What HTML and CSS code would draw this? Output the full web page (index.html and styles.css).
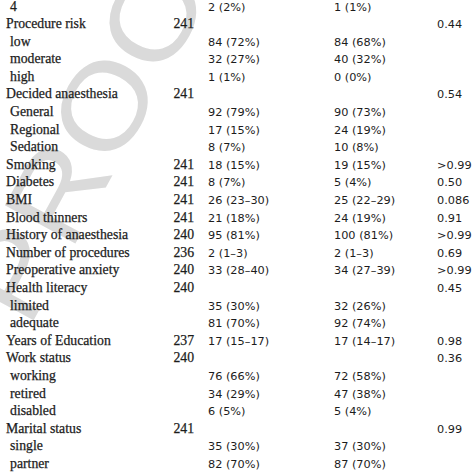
FILE: index.html
```html
<!DOCTYPE html>
<html>
<head>
<meta charset="utf-8">
<link rel="stylesheet" href="styles.css">
</head>
<body>
<div class="page">
  <svg class="watermark" width="474" height="474" viewBox="0 0 474 474">
    <text x="0" y="0" transform="translate(28.5,329.8) rotate(-61.5) scale(1.08,0.96)">PROOF</text>
  </svg>
  <table class="data">
    <colgroup>
      <col class="c-label"><col class="c-n"><col class="c-v1"><col class="c-v2"><col class="c-p">
    </colgroup>
    <tbody>
      <tr class="sub"><td>4</td><td></td><td>2 (2%)</td><td>1 (1%)</td><td></td></tr>
      <tr><td>Procedure risk</td><td>241</td><td></td><td></td><td>0.44</td></tr>
      <tr class="sub"><td>low</td><td></td><td>84 (72%)</td><td>84 (68%)</td><td></td></tr>
      <tr class="sub"><td>moderate</td><td></td><td>32 (27%)</td><td>40 (32%)</td><td></td></tr>
      <tr class="sub"><td>high</td><td></td><td>1 (1%)</td><td>0 (0%)</td><td></td></tr>
      <tr><td>Decided anaesthesia</td><td>241</td><td></td><td></td><td>0.54</td></tr>
      <tr class="sub"><td>General</td><td></td><td>92 (79%)</td><td>90 (73%)</td><td></td></tr>
      <tr class="sub"><td>Regional</td><td></td><td>17 (15%)</td><td>24 (19%)</td><td></td></tr>
      <tr class="sub"><td>Sedation</td><td></td><td>8 (7%)</td><td>10 (8%)</td><td></td></tr>
      <tr><td>Smoking</td><td>241</td><td>18 (15%)</td><td>19 (15%)</td><td>&gt;0.99</td></tr>
      <tr><td>Diabetes</td><td>241</td><td>8 (7%)</td><td>5 (4%)</td><td>0.50</td></tr>
      <tr><td>BMI</td><td>241</td><td>26 (23–30)</td><td>25 (22–29)</td><td>0.086</td></tr>
      <tr><td>Blood thinners</td><td>241</td><td>21 (18%)</td><td>24 (19%)</td><td>0.91</td></tr>
      <tr><td>History of anaesthesia</td><td>240</td><td>95 (81%)</td><td>100 (81%)</td><td>&gt;0.99</td></tr>
      <tr><td>Number of procedures</td><td>236</td><td>2 (1–3)</td><td>2 (1–3)</td><td>0.69</td></tr>
      <tr><td>Preoperative anxiety</td><td>240</td><td>33 (28–40)</td><td>34 (27–39)</td><td>&gt;0.99</td></tr>
      <tr><td>Health literacy</td><td>240</td><td></td><td></td><td>0.45</td></tr>
      <tr class="sub"><td>limited</td><td></td><td>35 (30%)</td><td>32 (26%)</td><td></td></tr>
      <tr class="sub"><td>adequate</td><td></td><td>81 (70%)</td><td>92 (74%)</td><td></td></tr>
      <tr><td>Years of Education</td><td>237</td><td>17 (15–17)</td><td>17 (14–17)</td><td>0.98</td></tr>
      <tr><td>Work status</td><td>240</td><td></td><td></td><td>0.36</td></tr>
      <tr class="sub"><td>working</td><td></td><td>76 (66%)</td><td>72 (58%)</td><td></td></tr>
      <tr class="sub"><td>retired</td><td></td><td>34 (29%)</td><td>47 (38%)</td><td></td></tr>
      <tr class="sub"><td>disabled</td><td></td><td>6 (5%)</td><td>5 (4%)</td><td></td></tr>
      <tr><td>Marital status</td><td>241</td><td></td><td></td><td>0.99</td></tr>
      <tr class="sub"><td>single</td><td></td><td>35 (30%)</td><td>37 (30%)</td><td></td></tr>
      <tr class="sub"><td>partner</td><td></td><td>82 (70%)</td><td>87 (70%)</td><td></td></tr>
    </tbody>
  </table>
</div>
</body>
</html>
```

FILE: styles.css
```css
html, body {
  margin: 0;
  padding: 0;
  background: #ffffff;
  overflow: hidden;
}

.page {
  position: relative;
  width: 474px;
  height: 474px;
  overflow: hidden;
}

.watermark {
  position: absolute;
  left: 0;
  top: 0;
  z-index: 0;
}

.watermark text {
  font-family: "Liberation Sans", Arial, sans-serif;
  font-size: 121.4px;
  fill: #dadada;
}

.data {
  position: relative;
  z-index: 1;
  margin-top: -0.5px;
  border-collapse: collapse;
  table-layout: fixed;
  width: 520px;
  color: #1c1c1c;
}

.c-label { width: 166px; }
.c-n { width: 28px; }
.c-v1 { width: 140px; }
.c-v2 { width: 103px; }
.c-p { width: 83px; }

.data tr {
  height: 17.6px;
}

.data td {
  padding: 0;
  height: 17.6px;
  line-height: 13px;
  vertical-align: baseline;
  white-space: nowrap;
  font-family: "DejaVu Sans", Verdana, sans-serif;
  font-size: 11.3px;
}

.data td:nth-child(1) {
  font-family: "Liberation Serif", "Times New Roman", serif;
  font-size: 13.75px;
  padding-left: 6px;
  -webkit-text-stroke: 0.25px #1c1c1c;
}

.data tr.sub td:nth-child(1) {
  padding-left: 10px;
}

.data td:nth-child(2) {
  font-family: "Liberation Serif", "Times New Roman", serif;
  font-size: 13.75px;
  text-align: right;
  -webkit-text-stroke: 0.25px #1c1c1c;
}

.data td:nth-child(3) {
  padding-left: 14px;
}
```
